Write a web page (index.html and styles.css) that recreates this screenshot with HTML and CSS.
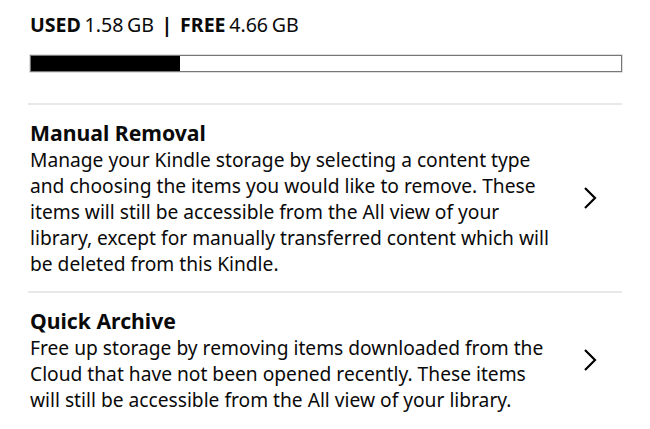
FILE: index.html
```html
<!DOCTYPE html>
<html>
<head>
<meta charset="utf-8">
<link rel="stylesheet" href="styles.css">
</head>
<body>
<div class="page">
  <div class="usage">
    <b>USED</b> 1.58 GB <span class="sep">|</span> <b>FREE</b> 4.66 GB
  </div>
  <div class="bar"><div class="fill" style="width:25.3%"></div></div>
  <div class="divider first"></div>
  <div class="item">
    <div class="text">
      <div class="title">Manual Removal</div>
      <div class="desc">Manage your Kindle storage by selecting a content type and choosing the items you would like to remove. These items will still be accessible from the All view of your library, except for manually transferred content which will be deleted from this Kindle.</div>
    </div>
    <svg class="chev" width="14" height="24" viewBox="0 0 14 24"><path d="M2 2 L12 12 L2 22" fill="none" stroke="#000" stroke-width="2.2"/></svg>
  </div>
  <div class="divider"></div>
  <div class="item">
    <div class="text">
      <div class="title">Quick Archive</div>
      <div class="desc">Free up storage by removing items downloaded from the Cloud that have not been opened recently. These items will still be accessible from the All view of your library.</div>
    </div>
    <svg class="chev" width="14" height="24" viewBox="0 0 14 24"><path d="M2 2 L12 12 L2 22" fill="none" stroke="#000" stroke-width="2.2"/></svg>
  </div>
</div>
</body>
</html>
```
FILE: styles.css
```css
html, body { margin: 0; padding: 0; background: #fff; }
body { font-family: "Noto Sans", "Open Sans", sans-serif; color: #0a0a0a; }
.page { padding: 12px 28px 0 28px; width: 594px; }
.usage { font-size: 19.6px; line-height: 26px; padding-left: 2px; word-spacing: -1.5px; }
.usage b { font-weight: 700; }
.sep { font-weight: 700; margin: 0 4px; }
.bar { margin: 17px 0 0 2px; height: 15px; border: 1px solid #777; box-shadow: 0 0 0 0.5px #bbb; }
.fill { height: 100%; background: #000; }
.divider { height: 2px; background: #e8e8e8; }
.divider.first { margin-top: 31px; }
.item { display: flex; align-items: center; padding: 14px 0 14px 2px; }
.text { width: 522px; }
.title { font-size: 21.2px; font-weight: 700; line-height: 28px; }
.desc { font-size: 19.2px; line-height: 26px; }
.chev { margin-left: 31px; }
```
